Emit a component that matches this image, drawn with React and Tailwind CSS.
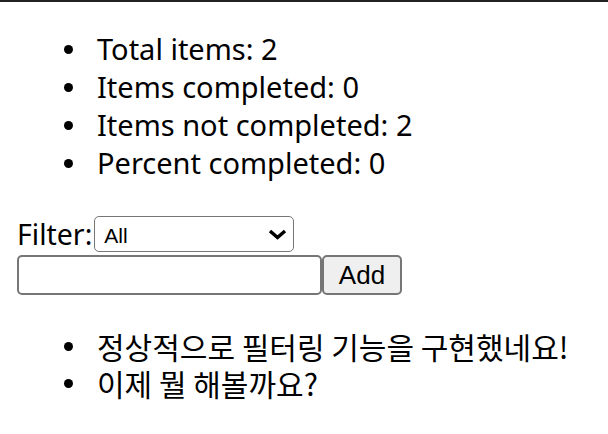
import { useState } from 'react'

const stats = [
  'Total items: 2',
  'Items completed: 0',
  'Items not completed: 2',
  'Percent completed: 0',
]

const notes = ['정상적으로 필터링 기능을 구현했네요!', '이제 뭘 해볼까요?']

function Bullet({ children }) {
  return (
    <li className="flex items-center">
      <span className="ml-[47px] mr-[24px] h-[9px] w-[9px] shrink-0 rounded-full bg-black" />
      <span>{children}</span>
    </li>
  )
}

export default function App() {
  const [filter, setFilter] = useState('all')
  const [text, setText] = useState('')

  return (
    <div className="min-h-[434px] border-t-2 border-[#222] bg-white px-[17px] font-['Noto_Sans','Noto_Sans_CJK_KR',sans-serif] text-black">
      <ul className="mt-[28px] text-[29px] leading-[38px]">
        {stats.map(s => <Bullet key={s}>{s}</Bullet>)}
      </ul>

      <div className="mt-[33px] flex items-center text-[28.5px] leading-[38px]">
        <span>Filter:</span>
        <div className="relative ml-[2px] flex">
          <select
            value={filter}
            onChange={e => setFilter(e.target.value)}
            className="h-[36px] w-[200px] appearance-none rounded-[5px] border border-[#767676] bg-white pl-[9px] pt-[3px] font-['Liberation_Sans',Arial,sans-serif] !text-[21px] leading-[30px]"
          >
            <option value="all">All</option>
            <option value="done">Completed</option>
            <option value="todo">Not completed</option>
          </select>
          <svg className="pointer-events-none absolute right-[7px] top-[13px]" width="19" height="11" viewBox="0 0 19 11">
            <path d="M2 2 L9.5 8.5 L17 2" fill="none" stroke="#000" strokeWidth="3.5" />
          </svg>
        </div>
      </div>

      <div className="mt-[2px] flex">
        <input
          value={text}
          onChange={e => setText(e.target.value)}
          className="h-[40px] w-[305px] rounded-[5px] border-2 border-[#767676] bg-white px-2 text-[20px]"
        />
        <button className="h-[40px] w-[80px] rounded-[5px] border-2 border-[#767676] bg-[#efefef] font-['Liberation_Sans',Arial,sans-serif] !text-[26px] leading-none">
          Add
        </button>
      </div>

      <ul className="mt-[33px] font-['Noto_Sans_CJK_KR','Noto_Sans',sans-serif] text-[30px] leading-[37px]">
        {notes.map(s => <Bullet key={s}>{s}</Bullet>)}
      </ul>
    </div>
  )
}
